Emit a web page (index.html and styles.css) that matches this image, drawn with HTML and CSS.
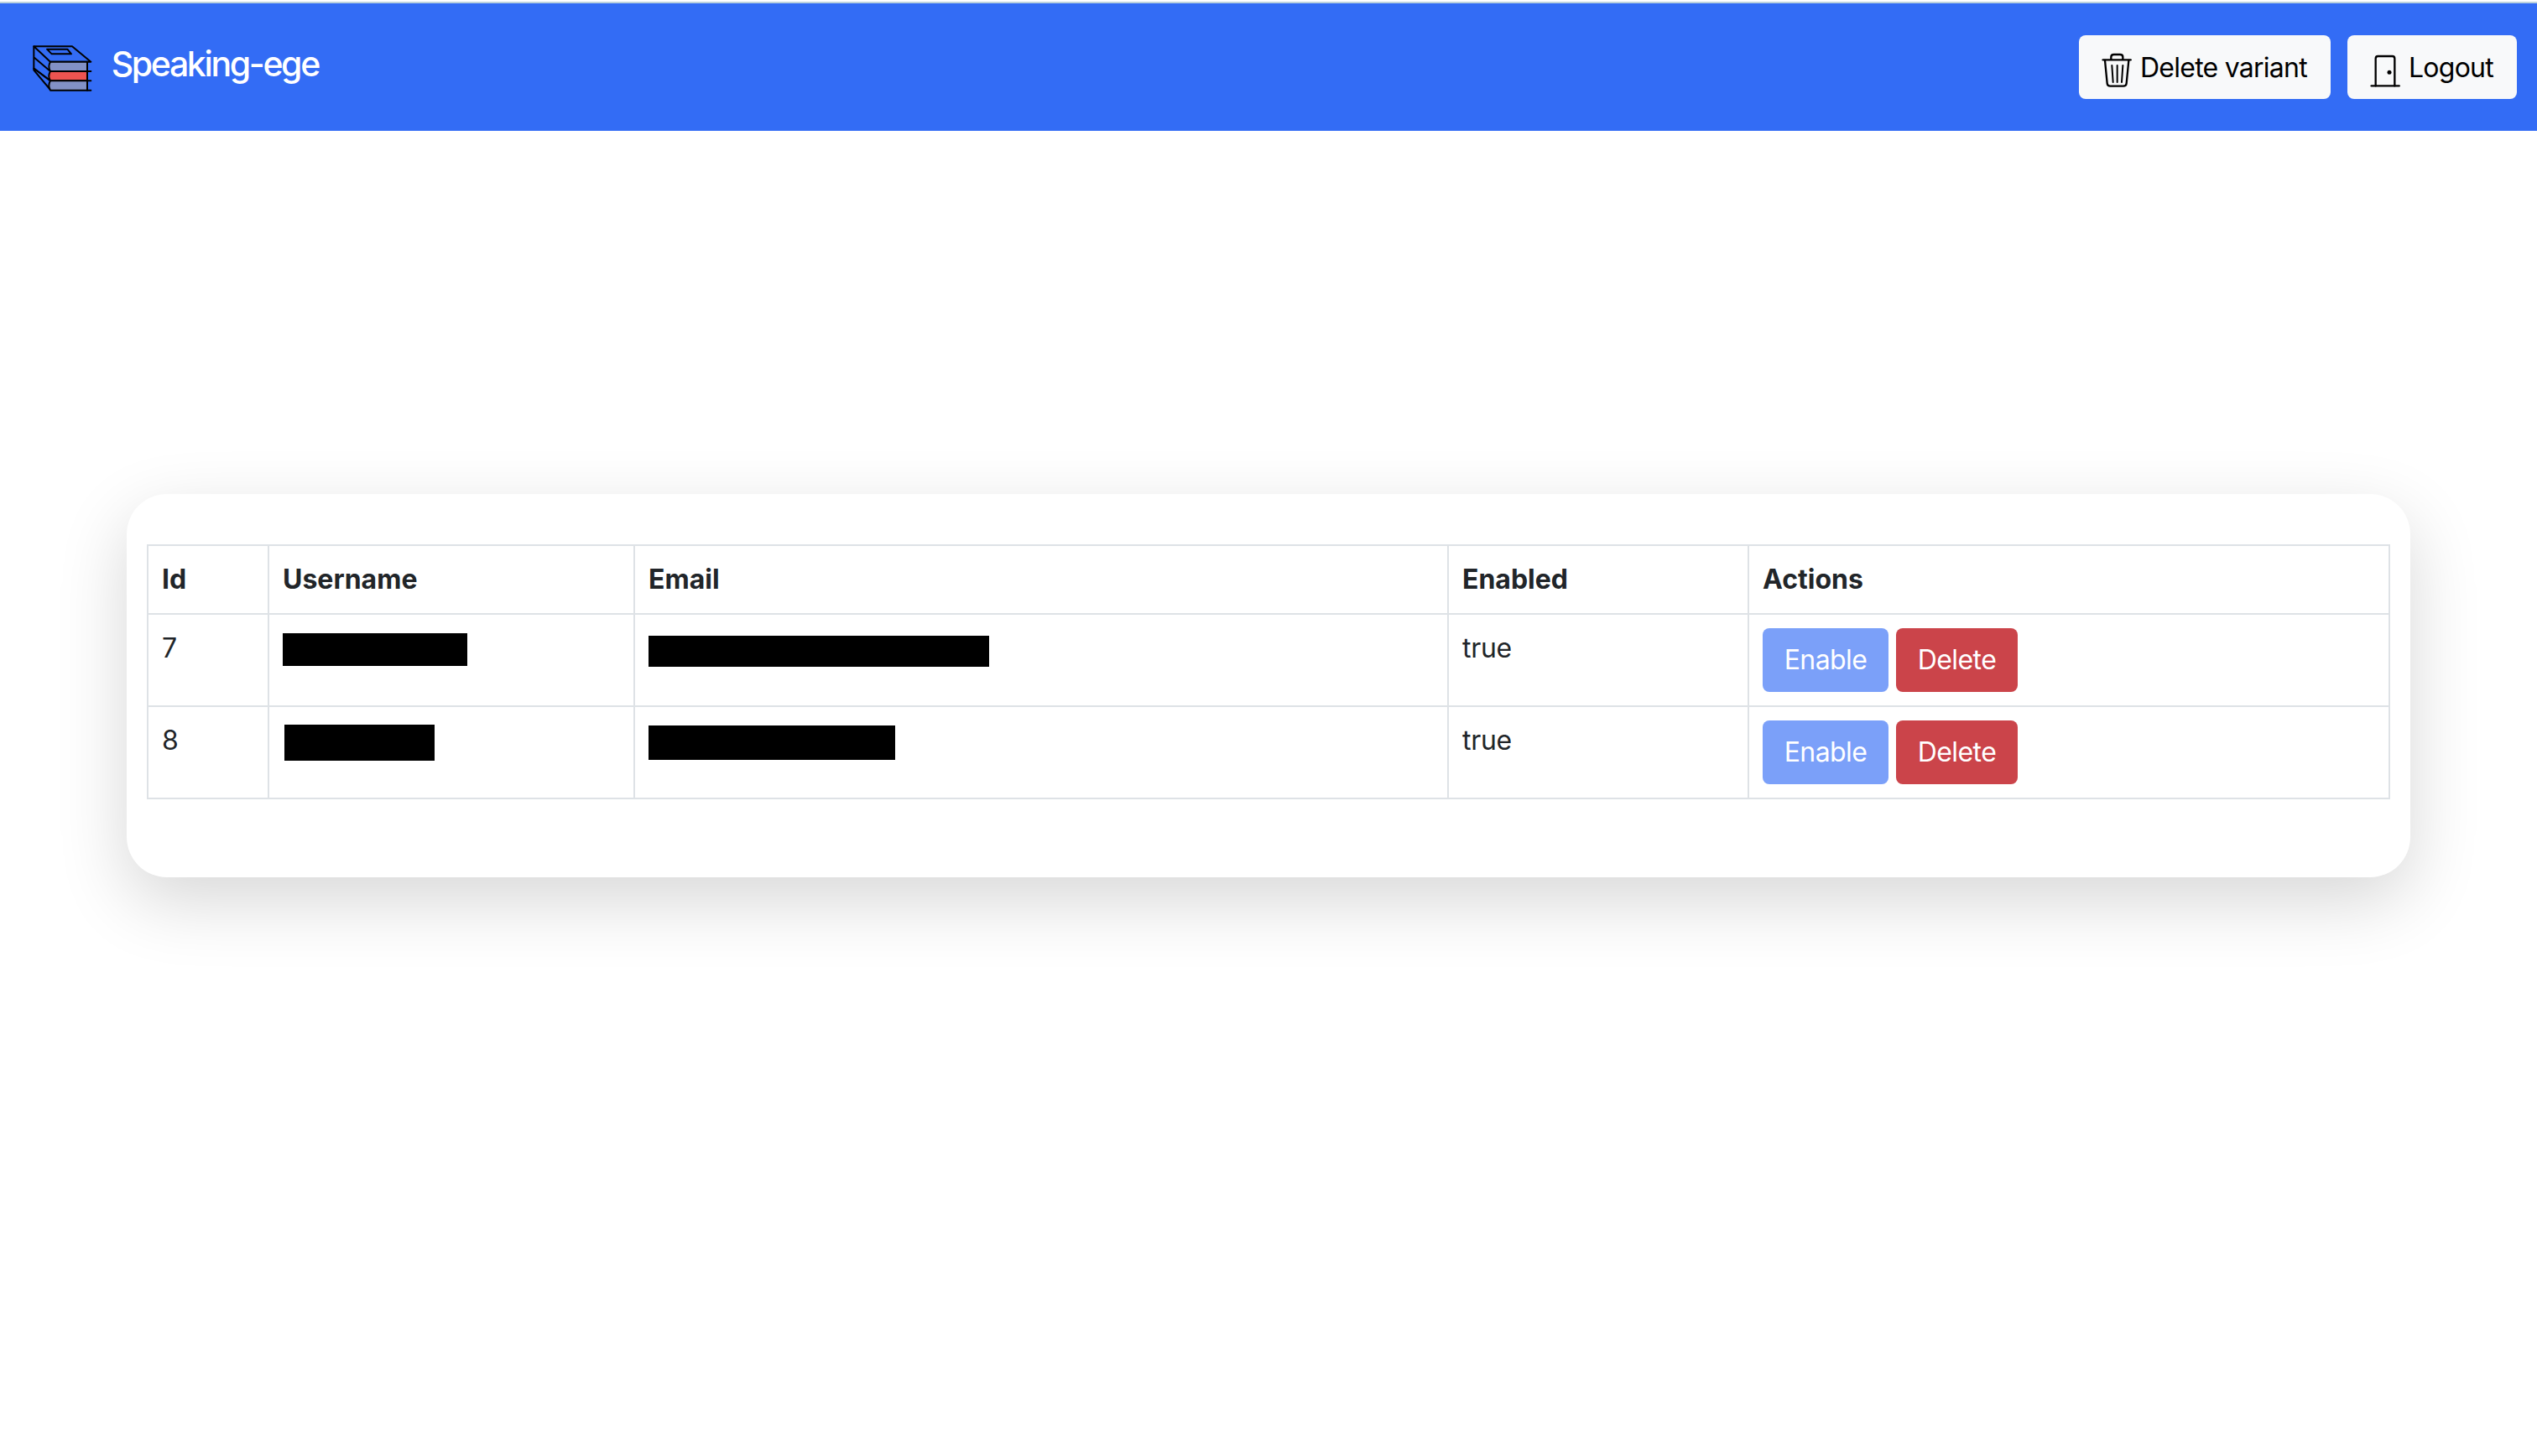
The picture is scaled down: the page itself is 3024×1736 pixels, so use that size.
FILE: index.html
```html
<!DOCTYPE html>
<html lang="en">
<head>
<meta charset="utf-8">
<title>Speaking-ege</title>
<link rel="stylesheet" href="styles.css">
</head>
<body>
<div class="topline"></div>
<nav class="navbar">
  <a class="brand">
    <svg class="logo" viewBox="42 50 212 172" fill="none" stroke="#000" stroke-width="6" stroke-linejoin="round" stroke-linecap="round">
      <path d="M46 57H183L250 112H105Z" fill="#336cf5"/>
      <path d="M93 67H166L180 84H110Z"/>
      <path d="M46 57V136L105 180V146L46 96" fill="#336cf5"/>
      <path d="M46 136V142L105 212V180Z" fill="#336cf5"/>
      <path d="M105 112Q95 129 105 146H237V112Z" fill="#8291c6"/>
      <path d="M105 146Q95 163 105 180H237V146Z" fill="#ee5450"/>
      <path d="M105 180Q95 197 105 214H237V180Z" fill="#8291c6"/>
      <path d="M237 112V214M237 146H250M237 180H250M237 214H250"/>
    </svg>
    <span class="brand-text">Speaking-ege</span>
  </a>
  <div class="nav-actions">
    <button class="nav-btn nav-btn-variant">
      <svg class="nav-icon" viewBox="42 18 120 144" fill="none" stroke="#000" stroke-width="7" stroke-linecap="round" stroke-linejoin="round">
        <path d="M53 64H152"/>
        <path d="M82 62V54Q82 45 92 45H114Q124 45 124 54V62"/>
        <path d="M60 66L68 148Q69 158 79 158H126Q136 158 137 148L145 66"/>
        <path d="M85 84L89 144M104 84V144M124 84L120 144" stroke-width="6"/>
      </svg>
      <span class="nav-label">Delete variant</span>
    </button>
    <button class="nav-btn nav-btn-logout">
      <svg class="nav-icon" viewBox="42 18 120 144" fill="none" stroke="#000" stroke-width="7" stroke-linecap="round" stroke-linejoin="round">
        <path d="M53 157H152"/>
        <path d="M68 157V60Q68 51 76 51H128Q136 51 136 60V157"/>
        <circle cx="117" cy="109" r="7.5" fill="#000" stroke="none"/>
      </svg>
      <span class="nav-label">Logout</span>
    </button>
  </div>
</nav>
<main class="card">
  <table class="users">
    <colgroup>
      <col class="col-id">
      <col class="col-user">
      <col class="col-email">
      <col class="col-enabled">
      <col>
    </colgroup>
    <thead>
      <tr><th>Id</th><th>Username</th><th>Email</th><th>Enabled</th><th>Actions</th></tr>
    </thead>
    <tbody>
      <tr>
        <td>7</td>
        <td><div class="redact redact-user-a"></div></td>
        <td><div class="redact redact-email-a"></div></td>
        <td>true</td>
        <td><div class="actions"><button class="btn btn-enable">Enable</button><button class="btn btn-delete">Delete</button></div></td>
      </tr>
      <tr>
        <td>8</td>
        <td><div class="redact redact-user-b"></div></td>
        <td><div class="redact redact-email-b"></div></td>
        <td>true</td>
        <td><div class="actions"><button class="btn btn-enable">Enable</button><button class="btn btn-delete">Delete</button></div></td>
      </tr>
    </tbody>
  </table>
</main>
</body>
</html>
```

FILE: styles.css
```css
* { box-sizing: border-box; }
html, body { margin: 0; padding: 0; background: #fff; }
body {
  font-family: "Inter", "Liberation Sans", sans-serif;
  font-size: 32px;
  line-height: 48px;
  color: #212529;
  padding-top: 2px;
  min-height: 100vh;
}
.topline { height: 2px; background: #bcd2dd; }
.navbar {
  height: 152px;
  background: #336cf5;
  display: flex;
  align-items: center;
  justify-content: space-between;
  padding: 0 24px 0 39px;
}
.brand { display: flex; align-items: center; gap: 23px; margin-top: -4px; }
.logo { width: 70.67px; height: 57.33px; margin-top: 8px; }
.brand-text { font-size: 41px; line-height: 60px; font-weight: 450; color: #fff; letter-spacing: -2.35px; margin-top: -4px; }
.nav-actions { display: flex; gap: 20px; }
.nav-btn {
  display: flex;
  align-items: center;
  gap: 8px;
  height: 76px;
  padding: 0 0 0 26px;
  border: 0;
  border-radius: 8px;
  background: #f8f9fa;
  color: #000;
  font: inherit;
  letter-spacing: -0.75px;
}
.nav-btn-variant { width: 300px; }
.nav-btn-logout { width: 202px; }
.nav-label { padding-top: 2px; }
.nav-icon { width: 40px; height: 48px; margin-left: -1px; }
.card {
  width: 2722px;
  margin: 433px auto 0;
  padding: 60px 24px 93px;
  background: #fff;
  border-radius: 48px;
  box-shadow: 0 28px 84px rgba(0, 0, 0, .16);
}
.users {
  width: 100%;
  table-layout: fixed;
  border-collapse: collapse;
}
.col-id { width: 144px; }
.col-user { width: 436px; }
.col-email { width: 970px; }
.col-enabled { width: 358px; }
.users th, .users td {
  border: 2px solid #dee2e6;
  padding: 16px;
  text-align: left;
  vertical-align: top;
}
.users th { font-weight: 700; }
.users td { letter-spacing: -0.3px; }
.redact { background: #000; }
.redact-user-a { width: 220px; height: 39px; margin-top: 6px; }
.redact-user-b { width: 179px; height: 43px; margin: 5px 0 0 2px; }
.redact-email-a { width: 406px; height: 37px; margin-top: 9px; }
.redact-email-b { width: 294px; height: 41px; margin-top: 6px; }
.actions { display: flex; gap: 9px; }
.btn {
  height: 76px;
  padding: 0;
  border: 0;
  border-radius: 8px;
  color: #fff;
  font: inherit;
  letter-spacing: -0.6px;
}
.btn-enable { width: 150px; background: #7ba0f9; }
.btn-delete { width: 145px; background: #cb444a; }
```
